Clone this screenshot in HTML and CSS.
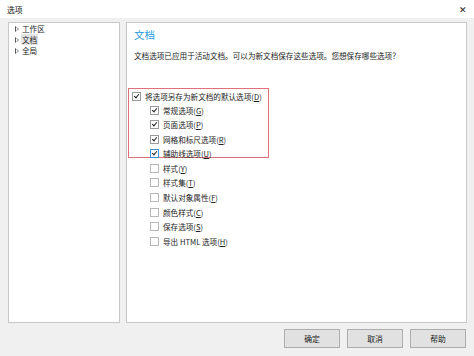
FILE: index.html
```html
<!DOCTYPE html>
<html lang="zh-CN">
<head>
    <meta charset="UTF-8">
    <title>选项</title>
    <link rel="stylesheet" href="styles.css">
</head>
<body>
    <div class="dialog">
        <div class="titlebar">
            <span class="title">选项</span>
            <span class="close">&#x2715;</span>
        </div>
        <div class="content">
            <div class="tree">
                <div class="tree-item"><span class="arrow"></span><span class="label">工作区</span></div>
                <div class="tree-item"><span class="arrow"></span><span class="label selected">文档</span></div>
                <div class="tree-item"><span class="arrow"></span><span class="label">全局</span></div>
            </div>
            <div class="page">
                <div class="heading">文档</div>
                <div class="desc">文档选项已应用于活动文档。可以为新文档保存这些选项。您想保存哪些选项？</div>
                <div class="highlight">
                    <label class="check"><span class="box checked"></span>将选项另存为新文档的默认选项(<u>D</u>)</label>
                    <label class="check sub"><span class="box checked"></span>常规选项(<u>G</u>)</label>
                    <label class="check sub"><span class="box checked"></span>页面选项(<u>P</u>)</label>
                    <label class="check sub"><span class="box checked"></span>网格和标尺选项(<u>R</u>)</label>
                    <label class="check sub"><span class="box checked focus"></span>辅助线选项(<u>U</u>)</label>
                </div>
                <div class="plain">
                    <label class="check sub"><span class="box"></span>样式(<u>Y</u>)</label>
                    <label class="check sub"><span class="box"></span>样式集(<u>T</u>)</label>
                    <label class="check sub"><span class="box"></span>默认对象属性(<u>F</u>)</label>
                    <label class="check sub"><span class="box"></span>颜色样式(<u>C</u>)</label>
                    <label class="check sub"><span class="box"></span>保存选项(<u>S</u>)</label>
                    <label class="check sub"><span class="box"></span>导出 HTML 选项(<u>H</u>)</label>
                </div>
            </div>
        </div>
        <div class="footer">
            <button class="btn">确定</button>
            <button class="btn">取消</button>
            <button class="btn">帮助</button>
        </div>
    </div>
</body>
</html>
```

FILE: styles.css
```css
body {
    margin: 0;
    font-family: "Noto Sans CJK SC", "Liberation Sans", sans-serif;
    font-size: 7.6px;
    color: #222;
    background-color: #f0f0f0;
}
.dialog {
    width: 474px;
    height: 356px;
    display: flex;
    flex-direction: column;
    background-color: #f0f0f0;
}
.titlebar {
    height: 18px;
    display: flex;
    align-items: center;
    justify-content: space-between;
    padding: 0 7px 0 7px;
    background-color: #fff;
}
.title {
    font-size: 7.8px;
    color: #111;
}
.close {
    font-size: 9px;
    color: #222;
}
.content {
    display: flex;
    gap: 6px;
    padding: 4px 7px 0 8px;
    height: 301px;
}
.tree {
    width: 112px;
    background-color: #fff;
    border: 1px solid #c8c8c8;
    padding-top: 0;
    box-sizing: border-box;
}
.tree-item {
    height: 11px;
    line-height: 11px;
    display: flex;
    align-items: center;
    padding-left: 6px;
    white-space: nowrap;
}
.label {
    padding: 0 1px;
}
.label.selected {
    background-color: #e4e4e4;
}
.arrow {
    width: 0;
    height: 0;
    border-top: 3px solid transparent;
    border-bottom: 3px solid transparent;
    border-left: 4px solid #555;
    margin-right: 2px;
    position: relative;
    flex-shrink: 0;
}
.arrow::after {
    content: "";
    position: absolute;
    left: -3px;
    top: -2px;
    border-top: 2px solid transparent;
    border-bottom: 2px solid transparent;
    border-left: 2px solid #fff;
}
.page {
    flex: 1;
    background-color: #fff;
    border: 1px solid #c8c8c8;
    box-sizing: border-box;
    padding: 3px 0 0 1px;
}
.heading {
    font-size: 10.5px;
    color: #1c9be0;
    padding-left: 6px;
    height: 18px;
    line-height: 18px;
}
.desc {
    padding-left: 6px;
    margin-top: 5px;
    line-height: 14px;
}
.highlight {
    margin-top: 25px;
    width: 141px;
    height: 70px;
    border: 1px solid #e0707a;
    box-sizing: border-box;
}
.plain {
    margin-top: 3px;
}
.check {
    display: flex;
    align-items: center;
    height: 14.3px;
    padding-left: 3px;
    white-space: nowrap;
}
.check.sub {
    padding-left: 21px;
}
.plain .check {
    height: 14.6px;
    padding-left: 22px;
}
.box {
    width: 7px;
    height: 7px;
    border: 1px solid #b8b8b8;
    background-color: #fff;
    margin-right: 4px;
    position: relative;
    flex-shrink: 0;
}
.box.checked {
    border-color: #9a9a9a;
}
.box.checked::after {
    content: "";
    position: absolute;
    left: 2px;
    top: 0;
    width: 2px;
    height: 4px;
    border-right: 1.5px solid #222;
    border-bottom: 1.5px solid #222;
    transform: rotate(40deg);
}
.box.focus {
    border-color: #3c8fd8;
}
u {
    text-decoration: underline;
}
.footer {
    display: flex;
    justify-content: flex-end;
    gap: 7px;
    padding: 6px 8px 0 0;
}
.btn {
    width: 56px;
    height: 19px;
    font-family: "Noto Sans CJK SC", sans-serif;
    font-size: 7.8px;
    color: #222;
    background-color: #e1e1e1;
    border: 1px solid #adadad;
    padding: 0;
}
```
